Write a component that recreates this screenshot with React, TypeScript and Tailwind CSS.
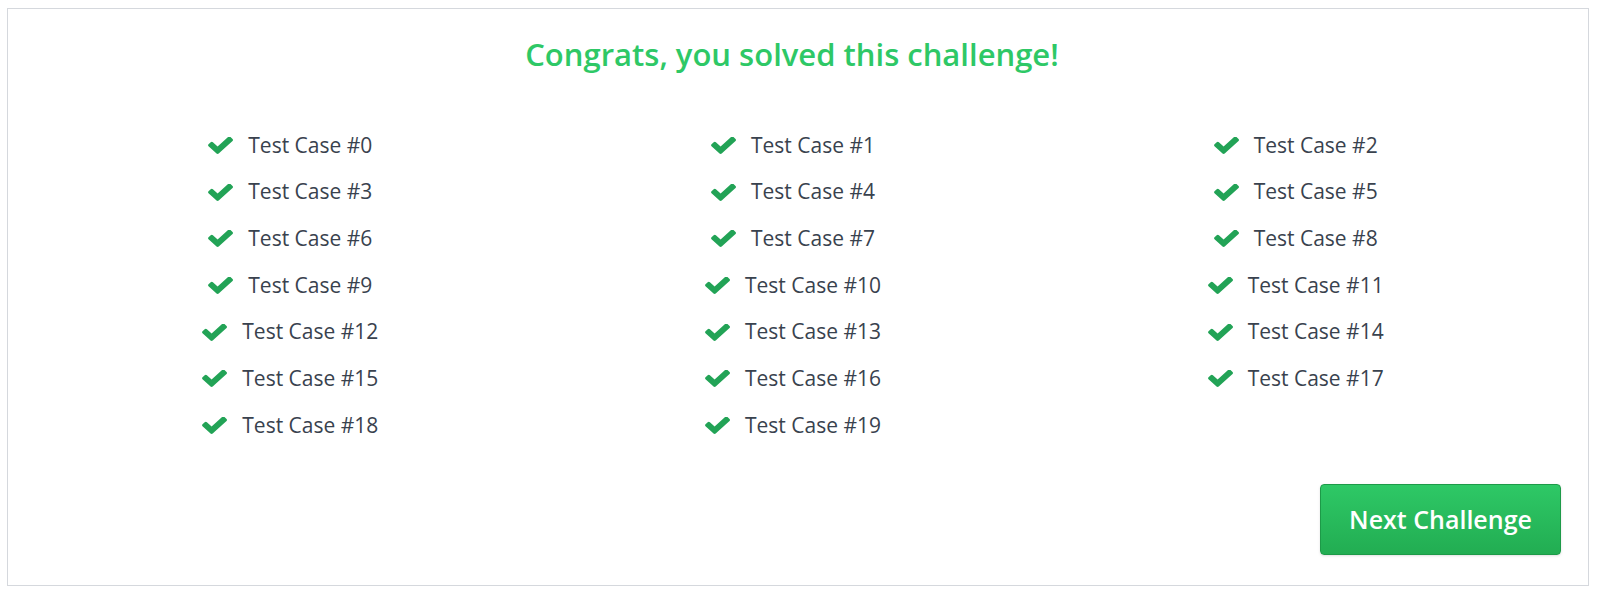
const cases = Array.from({ length: 20 }, (_, i) => i);

function Check() {
  return (
    <svg viewBox="117 370 1554 1152" preserveAspectRatio="none" className="w-[25px] h-[17px] shrink-0 text-[#22a356]" fill="currentColor">
      <path d="M1671 566q0 40-28 68l-724 724-136 136q-28 28-68 28t-68-28l-136-136-362-362q-28-28-28-68t28-68l136-136q28-28 68-28t68 28l294 295 656-657q28-28 68-28t68 28l136 136q28 28 28 68z" />
    </svg>
  );
}

function CaseItem({ n }: { n: number }) {
  return (
    <div className="h-[46.7px] flex items-center justify-center">
      <div className="flex items-center gap-[15px]">
        <Check />
        <span className="text-[21px] text-[#39424e]">Test Case #{n}</span>
      </div>
    </div>
  );
}

export default function App() {
  return (
    <div className="bg-white pt-2 pl-[7px] pr-[11px] pb-[10px]" style={{ fontFamily: '"Open Sans", "Noto Sans", sans-serif' }}>
      <div className="border border-[#d5d8dd] bg-white">
        {/* Heading */}
        <div className="pt-[25px] pr-[12px]">
          <h2 className="text-center text-[31px] leading-[40px] font-semibold text-[#2ec866]">
            Congrats, you solved this challenge!
          </h2>
        </div>

        {/* Test cases */}
        <div className="mt-[48px] pl-[31px] pr-[41px] grid grid-cols-3">
          {cases.map((n) => (
            <CaseItem key={n} n={n} />
          ))}
        </div>

        {/* Footer */}
        <div className="mt-[35px] pb-[30px] pr-[27px] flex justify-end">
          <button className="w-[241px] h-[71px] rounded bg-gradient-to-b from-[#2ec866] to-[#22ad52] border border-[#1d9a48] text-white text-[25px] font-semibold shadow-sm">
            Next Challenge
          </button>
        </div>
      </div>
    </div>
  );
}
